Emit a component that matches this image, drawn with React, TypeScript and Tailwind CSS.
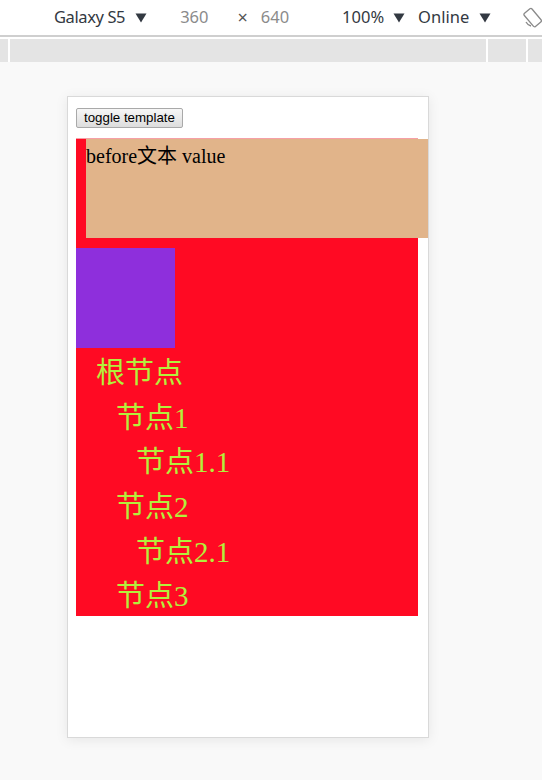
import React from 'react';

type Node = { label: string; children?: Node[] };

const tree: Node = {
  label: '根节点',
  children: [
    { label: '节点1', children: [{ label: '节点1.1' }] },
    { label: '节点2', children: [{ label: '节点2.1' }] },
    { label: '节点3' },
  ],
};

const TreeItem: React.FC<{ node: Node }> = ({ node }) => (
  <div className="pl-[20px]">
    <div className="leading-[44.7px] h-[44.7px]">{node.label}</div>
    {node.children?.map((c) => <TreeItem key={c.label} node={c} />)}
  </div>
);

const Caret = () => (
  <svg width="12" height="10" viewBox="0 0 12 10" className="block">
    <path d="M0.5 0.5 H11.5 L6 9.5 Z" fill="#333942" />
  </svg>
);

export default function App() {
  return (
    <div className="w-[542px] h-[780px] bg-[#f9f9f9] overflow-hidden">
      {/* devtools toolbar */}
      <div className="h-[37px] bg-white border-b-2 border-[#cfcfcf] flex items-center text-[16.5px] text-[#333942] font-['Noto_Sans',sans-serif] whitespace-nowrap">
        <span className="ml-[54px] tracking-[-0.4px]">Galaxy S5</span>
        <span className="ml-[10px]"><Caret /></span>
        <span className="ml-[33px] text-[#8b8b8b]">360</span>
        <span className="ml-[29px] text-[#555] text-[18px]">×</span>
        <span className="ml-[13px] text-[#8b8b8b]">640</span>
        <span className="ml-[53px]">100%</span>
        <span className="ml-[9px]"><Caret /></span>
        <span className="ml-[13px]">Online</span>
        <span className="ml-[10px]"><Caret /></span>
        <svg className="ml-[31px] shrink-0" width="22" height="22" viewBox="0 0 22 22" fill="none" stroke="#8a8a8a" strokeWidth="1.3">
          <rect x="6" y="2" width="10" height="17" rx="1.5" transform="rotate(-40 11 11)" />
          <path d="M4 15 A8 8 0 0 0 9 19" />
        </svg>
      </div>
      <div className="h-[25px] pt-[2px] bg-white">
        <div className="h-[23px] bg-[#e4e4e4] flex">
          <div className="w-[8px]" />
          <div className="w-[2px] bg-white" />
          <div className="w-[476px]" />
          <div className="w-[2px] bg-white" />
          <div className="w-[38px]" />
          <div className="w-[2px] bg-white" />
        </div>
      </div>

      {/* device frame */}
      <div className="ml-[67px] mt-[34px] w-[362px] h-[642px] bg-white border border-[#d9d9d9] shadow-[0_2px_12px_rgba(0,0,0,0.08)] overflow-hidden">
        <div className="pl-[8px] pt-[11px] font-['Liberation_Serif','Noto_Sans_CJK_SC',serif]">
          <button className="block h-[20px] px-[7px] text-[13.3px] leading-none text-black font-['Liberation_Sans',sans-serif] border border-[#a9a9a9] rounded-[2px] bg-gradient-to-b from-[#f7f7f7] to-[#dddddd]">
            toggle template
          </button>
          <div className="mt-[10px] w-[342px] h-[478px] bg-[#ff0a23] border-t border-[#f6a0a6]">
            <div className="ml-[10px] w-[342px] h-[99px] bg-[#e1b48a] text-[20px] text-black leading-[34px]">
              before文本 value
            </div>
            <div className="mt-[10px] w-[99px] h-[100px] bg-[#8e2fdc]" />
            <div className="pt-[3px] text-[29px] text-[#b2f03c]">
              <TreeItem node={tree} />
            </div>
          </div>
        </div>
      </div>
    </div>
  );
}
